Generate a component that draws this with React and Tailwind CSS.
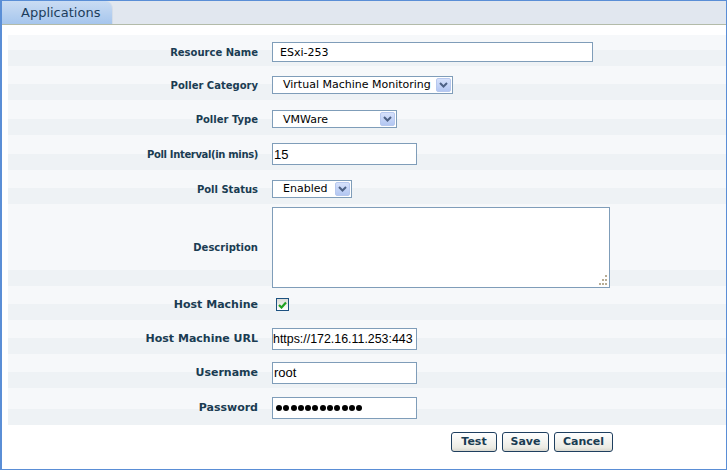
import React from "react";

const LABEL = "font-['DejaVu_Sans',sans-serif] font-bold text-[#1a3c52]";
const VALUE_ARIAL = "font-['Liberation_Sans',Arial,sans-serif] text-[13px] text-black";
const VALUE_VERDANA = "font-['DejaVu_Sans',sans-serif] text-[11px] text-black";

function Row({ label, h, children, top = false, wide = false, tight = false }) {
  return (
    <div
      className="flex items-center bg-[linear-gradient(to_bottom,#f6f8fa_calc(100%-16px),#eef2f5_calc(100%-16px))]"
      style={{ height: h }}
    >
      <div
        className={`w-[250px] shrink-0 pt-[4px] text-right ${LABEL} ${wide ? "text-[11px]" : "text-[10px]"} ${
          tight ? "tracking-[-0.35px]" : ""
        }`}
      >
        {label}
      </div>
      <div className={`ml-[14px] flex ${top ? "self-start pt-[3px]" : "pt-[3px]"}`}>{children}</div>
    </div>
  );
}

function TextBox({ value, width, h = 22, verdana = false, small = false }) {
  return (
    <input
      readOnly
      value={value}
      className={`border border-[#7f9db9] bg-white outline-none ${
        verdana ? "px-[7px] " + VALUE_VERDANA : "px-[1px] " + VALUE_ARIAL
      } ${small ? "!px-0 !text-[12.4px]" : ""}`}
      style={{ width, height: h }}
    />
  );
}

function Select({ value, width }) {
  return (
    <div
      className="flex h-[18px] items-center justify-between border border-[#7f9db9] bg-white"
      style={{ width }}
    >
      <span className={`pl-[10px] leading-none ${VALUE_VERDANA}`}>{value}</span>
      <span className="mr-[1px] flex h-[14px] w-[15px] items-center justify-center rounded-[2px] border border-[#b7c8ee] bg-[linear-gradient(to_bottom,#d6e1fb,#b3c7f2)]">
        <svg width="9" height="6" viewBox="0 0 9 6">
          <path d="M1 1 L4.5 4.5 L8 1" fill="none" stroke="#4d6185" strokeWidth="2" />
        </svg>
      </span>
    </div>
  );
}

function Button({ children, width }) {
  return (
    <button
      className={`h-[20px] rounded-[3px] border border-[#1f3f5f] bg-[linear-gradient(to_bottom,#ffffff,#ecebe4_80%,#d9d8cf)] ${LABEL} text-[11px]`}
      style={{ width }}
    >
      {children}
    </button>
  );
}

export default function App() {
  return (
    <div className="h-[470px] w-[727px] overflow-hidden border border-l-2 border-[#5a8ed6] bg-white">
      {/* Tab strip */}
      <div className="flex h-[24px] border-b border-[#b3bba9] bg-[#e1e7ef]">
        <div className="flex h-full w-[111px] items-center rounded-tr-[8px] border-r border-[#d4dde8] bg-[linear-gradient(to_bottom,#cadcf3,#a6c6ed)] pl-[19px] font-['DejaVu_Sans',sans-serif] text-[13px] text-[#1c3d5c]">
          Applications
        </div>
      </div>

      {/* Form */}
      <div className="ml-[6px] mt-[10px]">
        <Row label="Resource Name" h={31}>
          <TextBox value="ESxi-253" width={321} h={20} verdana />
        </Row>
        <Row label="Poller Category" h={34}>
          <Select value="Virtual Machine Monitoring" width={181} />
        </Row>
        <Row label="Poller Type" h={35}>
          <Select value="VMWare" width={125} />
        </Row>
        <Row label="Poll Interval(in mins)" h={35} tight>
          <TextBox value="15" width={145} />
        </Row>
        <Row label="Poll Status" h={34}>
          <Select value="Enabled" width={80} />
        </Row>
        <Row label="Description" h={82} top>
          <div className="relative h-[81px] w-[338px] border border-[#7f9db9] bg-white">
            <svg className="absolute bottom-[2px] right-[2px]" width="10" height="10" viewBox="0 0 10 10">
              <g fill="#b8ad95">
                <rect x="8" y="0" width="2" height="2" />
                <rect x="5" y="4" width="2" height="2" />
                <rect x="8" y="4" width="2" height="2" />
                <rect x="2" y="8" width="2" height="2" />
                <rect x="5" y="8" width="2" height="2" />
                <rect x="8" y="8" width="2" height="2" />
              </g>
            </svg>
          </div>
        </Row>
        <Row label="Host Machine" h={34} wide>
          <div className="ml-[4px] flex h-[13px] w-[13px] items-center justify-center border border-[#1c5180] bg-[linear-gradient(to_bottom,#dcdcd7,#ffffff)]">
            <svg width="9" height="8" viewBox="0 0 9 8">
              <path d="M1 4 L3.5 6.5 L8 1.5" fill="none" stroke="#21a121" strokeWidth="2.2" />
            </svg>
          </div>
        </Row>
        <Row label="Host Machine URL" h={34} wide>
          <TextBox value="https://172.16.11.253:443" width={145} small />
        </Row>
        <Row label="Username" h={34} wide>
          <TextBox value="root" width={145} />
        </Row>
        <Row label="Password" h={37} wide>
          <div className="flex h-[22px] w-[145px] items-center gap-[1.3px] border border-[#7f9db9] bg-white pl-[3px]">
            {Array.from({ length: 12 }).map((_, i) => (
              <span key={i} className="h-[6px] w-[6px] rounded-full bg-black" />
            ))}
          </div>
        </Row>
      </div>

      {/* Actions */}
      <div className="ml-[449px] mt-[7px] flex gap-[5px]">
        <Button width={46}>Test</Button>
        <Button width={47}>Save</Button>
        <Button width={59}>Cancel</Button>
      </div>
    </div>
  );
}
